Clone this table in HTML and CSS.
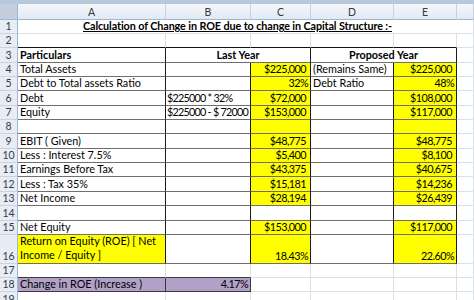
FILE: index.html
```html
<!DOCTYPE html>
<html>
<head>
<meta charset="utf-8">
<link rel="stylesheet" href="styles.css">
</head>
<body>
<div class="sheet">
  <div class="strip"></div>
  <div class="corner"></div>
  <div class="ch">A</div><div class="ch">B</div><div class="ch">C</div><div class="ch">D</div><div class="ch">E</div><div class="ch last"></div>

  <div class="rh">1</div>
  <div class="c title span5"><span>Calculation of Change in ROE due to change in Capital Structure :-</span></div>
  <div class="c"></div>

  <div class="rh">2</div>
  <div class="c top"></div><div class="c top"></div><div class="c top"></div><div class="c top"></div><div class="c top"></div><div class="c"></div>

  <div class="rh">3</div>
  <div class="c t b">Particulars</div>
  <div class="c t b ctr span2">Last Year</div>
  <div class="c t b ctr span2">Proposed Year</div>
  <div class="c"></div>

  <div class="rh">4</div>
  <div class="c t">Total Assets</div><div class="c t"></div><div class="c t y r cur">$225,000</div><div class="c t">(Remains Same)</div><div class="c t y r cur">$225,000</div><div class="c"></div>

  <div class="rh">5</div>
  <div class="c t">Debt to Total assets Ratio</div><div class="c t"></div><div class="c t y r num">32%</div><div class="c t">Debt Ratio</div><div class="c t y r num">48%</div><div class="c"></div>

  <div class="rh">6</div>
  <div class="c t">Debt</div><div class="c t tight">$225000 * 32%</div><div class="c t y r cur">$72,000</div><div class="c t"></div><div class="c t y r cur">$108,000</div><div class="c"></div>

  <div class="rh">7</div>
  <div class="c t">Equity</div><div class="c t tight">$225000 - $ 72000</div><div class="c t y r cur">$153,000</div><div class="c t"></div><div class="c t y r cur">$117,000</div><div class="c"></div>

  <div class="rh">8</div>
  <div class="c t"></div><div class="c t"></div><div class="c t y"></div><div class="c t"></div><div class="c t y"></div><div class="c"></div>

  <div class="rh">9</div>
  <div class="c t">EBIT ( Given)</div><div class="c t"></div><div class="c t y r cur">$48,775</div><div class="c t"></div><div class="c t y r cur">$48,775</div><div class="c"></div>

  <div class="rh">10</div>
  <div class="c t">Less : Interest 7.5%</div><div class="c t"></div><div class="c t y r cur">$5,400</div><div class="c t"></div><div class="c t y r cur">$8,100</div><div class="c"></div>

  <div class="rh">11</div>
  <div class="c t">Earnings Before Tax</div><div class="c t"></div><div class="c t y r cur">$43,375</div><div class="c t"></div><div class="c t y r cur">$40,675</div><div class="c"></div>

  <div class="rh">12</div>
  <div class="c t">Less : Tax 35%</div><div class="c t"></div><div class="c t y r cur">$15,181</div><div class="c t"></div><div class="c t y r cur">$14,236</div><div class="c"></div>

  <div class="rh">13</div>
  <div class="c t">Net Income</div><div class="c t"></div><div class="c t y r cur">$28,194</div><div class="c t"></div><div class="c t y r cur">$26,439</div><div class="c"></div>

  <div class="rh">14</div>
  <div class="c t"></div><div class="c t"></div><div class="c t"></div><div class="c t"></div><div class="c t"></div><div class="c"></div>

  <div class="rh">15</div>
  <div class="c t">Net Equity</div><div class="c t"></div><div class="c t y r cur">$153,000</div><div class="c t"></div><div class="c t y r cur">$117,000</div><div class="c"></div>

  <div class="rh">16</div>
  <div class="c t y wrap">Return on Equity (ROE) [ Net Income / Equity ]</div><div class="c t"></div><div class="c t y r num">18.43%</div><div class="c t"></div><div class="c t y r num">22.60%</div><div class="c"></div>

  <div class="rh">17</div>
  <div class="c under"></div><div class="c under"></div><div class="c"></div><div class="c"></div><div class="c"></div><div class="c"></div>

  <div class="rh">18</div>
  <div class="c p">Change in ROE (Increase )</div><div class="c p r num">4.17%</div><div class="c"></div><div class="c"></div><div class="c"></div><div class="c"></div>

  <div class="rh">19</div>
  <div class="c"></div><div class="c"></div><div class="c"></div><div class="c"></div><div class="c"></div><div class="c"></div>
</div>
</body>
</html>
```

FILE: styles.css
```css
html, body {
  margin: 0;
  padding: 0;
  background: #ffffff;
  overflow: hidden;
}

.sheet {
  width: 474px;
  height: 300px;
  overflow: hidden;
  display: grid;
  grid-template-columns: 18px 148px 85px 60px 83px 63px 1fr;
  grid-template-rows: 3.5px 16px repeat(15, 14.36px) 28.7px repeat(3, 14.36px);
  font-family: Lato, "Liberation Sans", sans-serif;
  font-size: 10.8px;
  color: #000000;
}

.strip {
  grid-column: 1 / -1;
  background: #b7c8dc;
}

.corner {
  background: #c3cfde;
  border-right: 1px solid #9eb6ce;
  border-bottom: 1px solid #9eb6ce;
}

.ch {
  background: linear-gradient(#f4f7fb, #e1e9f3);
  border-right: 1px solid #c5d1de;
  border-bottom: 1px solid #9eb6ce;
  display: flex;
  align-items: center;
  justify-content: center;
  color: #3a3a3a;
  font-size: 10.5px;
  padding-top: 1px;
}

.rh {
  background: #e6edf6;
  border-right: 1px solid #9eb6ce;
  border-bottom: 1px solid #c8d4e2;
  display: flex;
  align-items: flex-end;
  justify-content: center;
  padding-bottom: 1px;
  color: #3a3a3a;
  font-size: 10.5px;
  line-height: 12px;
}

.c {
  border-right: 1px solid #dadfe8;
  border-bottom: 1px solid #dadfe8;
  display: flex;
  align-items: flex-end;
  padding: 0 2px 1px 2px;
  line-height: 12px;
  white-space: nowrap;
  overflow: visible;
  min-width: 0;
}

.span5 { grid-column: span 5; }
.span2 { grid-column: span 2; }

.title {
  justify-content: center;
  font-weight: bold;
  border-right: none;
  letter-spacing: -0.1px;
}
.title span { text-decoration: underline; }

.top { border-bottom: 1px solid #111111; }

.t {
  border-right: 1px solid #1a1a1a;
  border-bottom: 1px solid #6f6f6f;
}

.b { font-weight: bold; }
.ctr { justify-content: center; }
.r { justify-content: flex-end; }

.num { letter-spacing: -0.55px; }
.cur { letter-spacing: -0.55px; padding-right: 4px; }
.tight { letter-spacing: -0.75px; padding-left: 1px; }

.y { background: #ffff00; }

.wrap {
  white-space: normal;
  line-height: 14.4px;
  padding-bottom: 0;
}

.under { border-bottom: 1px solid #3a3a3a; }

.p {
  background: #b1a0c7;
  border-right: 1px solid #3a3a3a;
  border-bottom: 1px solid #3a3a3a;
}
```
